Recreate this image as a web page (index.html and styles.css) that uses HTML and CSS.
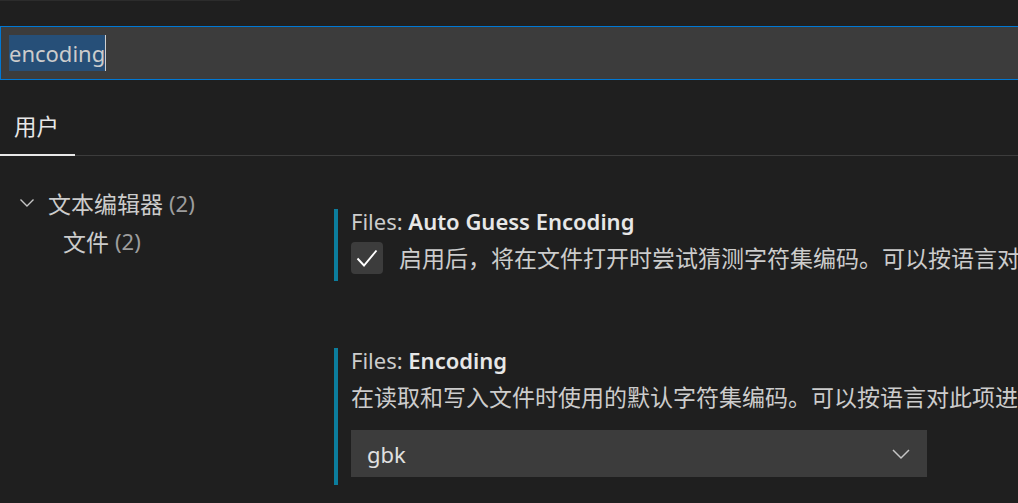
FILE: index.html
```html
<!DOCTYPE html>
<html lang="zh-CN">
<head>
<meta charset="utf-8">
<link rel="stylesheet" href="styles.css">
</head>
<body>
<div class="topstrip"></div>
<div class="search">
  <span class="sel">encoding</span><span class="caret"></span>
</div>
<div class="tabs">
  <div class="tab active">用户</div>
</div>
<div class="main">
  <div class="tree">
    <div class="row group">
      <svg class="chev" width="16" height="16" viewBox="0 0 16 16"><path d="M1.5 4.5 L8 11 L14.5 4.5" fill="none" stroke="#c5c5c5" stroke-width="1.4"/></svg>
      <span class="label">文本编辑器</span><span class="count">(2)</span>
    </div>
    <div class="row child">
      <span class="label">文件</span><span class="count">(2)</span>
    </div>
  </div>
  <div class="settings">
    <div class="setting s1">
      <div class="title"><span class="cat">Files: </span><span class="name">Auto Guess Encoding</span></div>
      <div class="checkrow">
        <span class="checkbox"><svg width="26" height="26" viewBox="0 0 26 26"><path d="M3.5 13.5 L10 20.5 L22.5 5.5" fill="none" stroke="#ffffff" stroke-width="1.9"/></svg></span>
        <span class="desc">启用后，将在文件打开时尝试猜测字符集编码。可以按语言对</span>
      </div>
    </div>
    <div class="setting s2">
      <div class="title"><span class="cat">Files: </span><span class="name">Encoding</span></div>
      <div class="desc">在读取和写入文件时使用的默认字符集编码。可以按语言对此项进</div>
      <div class="select">
        <span>gbk</span>
        <svg width="20" height="20" viewBox="0 0 20 20"><path d="M2 6 L10 14 L18 6" fill="none" stroke="#c5c5c5" stroke-width="1.5"/></svg>
      </div>
    </div>
  </div>
</div>
</body>
</html>
```

FILE: styles.css
```css
html, body {
  margin: 0;
  padding: 0;
  background: #1f1f1f;
  overflow: hidden;
  width: 1018px;
  height: 503px;
}
body {
  font-family: "Noto Sans", "Noto Sans CJK SC", sans-serif;
  font-size: 22px;
  color: #cccccc;
  white-space: nowrap;
}
.topstrip {
  width: 240px;
  height: 1px;
  background: #2c2c2c;
}
.search {
  margin-top: 25px;
  height: 52px;
  width: 1100px;
  border: 1px solid #0078d4;
  background: #3c3c3c;
  display: flex;
  align-items: center;
  padding-left: 8px;
  box-sizing: content-box;
}
.sel {
  background: #264f78;
  color: #cccccc;
  font-size: 22px;
  height: 36px;
  line-height: 36px;
  display: inline-block;
}
.caret {
  display: inline-block;
  width: 1px;
  height: 36px;
  background: #cfcfcf;
}
.tabs {
  margin-top: 32px;
  border-bottom: 1px solid #3c3c3c;
  display: flex;
}
.tab {
  position: relative;
  width: 61px;
  padding-left: 14px;
  font-size: 22.5px;
  line-height: 30px;
  padding-bottom: 13px;
  color: #e7e7e7;
}
.tab.active::after {
  content: "";
  position: absolute;
  left: 0;
  right: 0;
  bottom: -1px;
  height: 2px;
  background: #e7e7e7;
}
.main {
  display: flex;
  padding-top: 28px;
}
.tree {
  width: 334px;
  flex: none;
}
.row {
  display: flex;
  align-items: center;
  height: 38px;
  font-size: 23px;
}
.chev {
  margin-left: 19px;
  margin-right: 13px;
}
.row.child {
  padding-left: 63px;
}
.label {
  color: #cccccc;
}
.count {
  color: #9d9d9d;
  margin-left: 6px;
  font-size: 22px;
}
.settings {
  flex: 1;
  padding-top: 25px;
  overflow: hidden;
}
.setting {
  border-left: 4px solid #0c7d9d;
  padding-left: 13px;
}
.title {
  font-size: 22px;
  line-height: 24px;
}
.cat {
  color: #cccccc;
}
.name {
  color: #e7e7e7;
  font-weight: 600;
}
.checkrow {
  display: flex;
  align-items: center;
  margin-top: 9px;
  padding-bottom: 7px;
}
.checkbox {
  width: 32px;
  height: 32px;
  border-radius: 4px;
  background: #3c3c3c;
  display: flex;
  align-items: center;
  justify-content: center;
  margin-right: 16px;
  flex: none;
}
.desc {
  font-size: 23px;
  line-height: 28px;
  color: #cccccc;
}
.s2 {
  margin-top: 68px;
  padding-bottom: 8px;
}
.s2 .title {
  margin-top: -1px;
}
.s2 .desc {
  margin-top: 11px;
}
.select {
  margin-top: 19px;
  width: 576px;
  height: 47px;
  background: #3c3c3c;
  display: flex;
  align-items: center;
  justify-content: space-between;
  padding: 0 16px;
  box-sizing: border-box;
  font-size: 22px;
  color: #e0e0e0;
}
```
